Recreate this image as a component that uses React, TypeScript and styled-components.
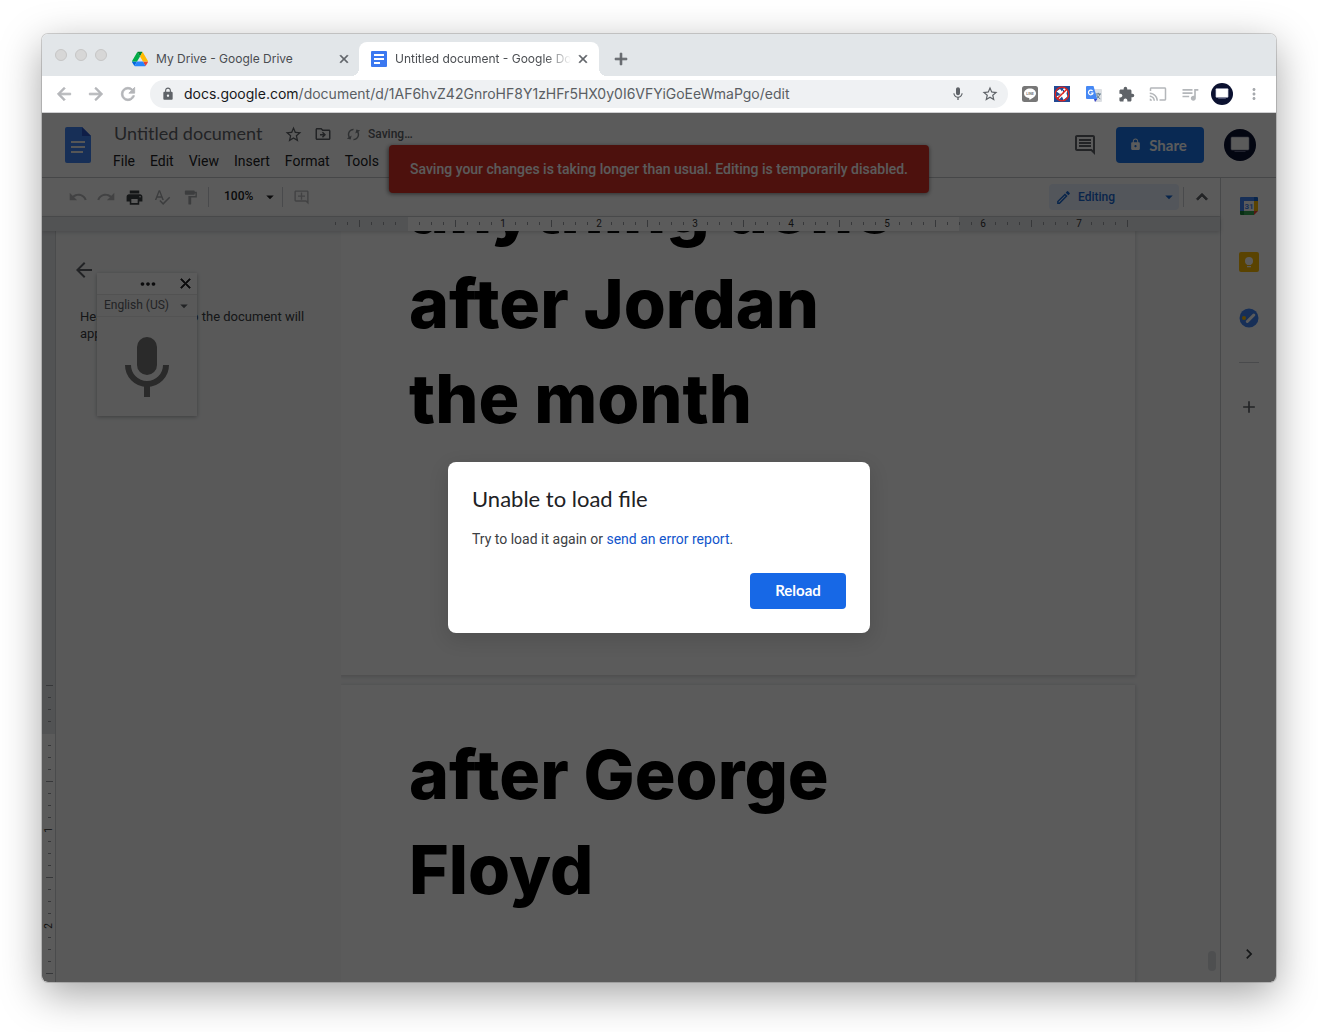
import React from 'react';
import styled, { createGlobalStyle, css } from 'styled-components';
import {
  MdAdd,
  MdArrowBack,
  MdArrowDropDown,
  MdArrowForward,
  MdCast,
  MdChevronRight,
  MdClose,
  MdExpandLess,
  MdExtension,
  MdFormatPaint,
  MdLock,
  MdMic,
  MdMoreHoriz,
  MdMoreVert,
  MdOutlineAddComment,
  MdOutlineDriveFileMove,
  MdOutlineInsertComment,
  MdOutlineModeEdit,
  MdPrint,
  MdQueueMusic,
  MdRedo,
  MdRefresh,
  MdSpellcheck,
  MdStarBorder,
  MdSync,
  MdUndo,
} from 'react-icons/md';

const uiFont = 'Inter, "Liberation Sans", sans-serif';
const docsFont = 'Roboto, "Liberation Sans", sans-serif';
const brandFont = 'Lato, Roboto, sans-serif';

const GlobalStyle = createGlobalStyle`
  *, *::before, *::after { box-sizing: border-box; }
  body { margin: 0; background: #fff; font-family: ${docsFont}; }
  button, input, select { font: inherit; color: inherit; }
  h1, p { margin: 0; }
`;

const Desktop = styled.div`
  display: flex;
  height: 100vh;
  padding: 34px 42px 50px;
`;

const BrowserWindow = styled.div`
  display: flex;
  flex: 1;
  flex-direction: column;
  min-width: 0;
  border-radius: 6px;
  overflow: hidden;
  box-shadow: 0 0 0 1px rgba(0, 0, 0, 0.16), 0 12px 42px rgba(0, 0, 0, 0.36);
`;

/* ---------- browser chrome ---------- */

const TabStrip = styled.div`
  display: flex;
  flex: none;
  height: 42px;
  padding-left: 13px;
  background: #e2e6e9;
  font-family: ${uiFont};
`;

const WindowControls = styled.div`
  display: flex;
  gap: 8px;
  width: 65px;
  padding-top: 15px;
`;

const WindowControl = styled.button`
  width: 12px;
  height: 12px;
  padding: 0;
  border: 1px solid #c6c6c6;
  border-radius: 50%;
  background: #d7d7d7;
`;

const Tab = styled.div<{ $active?: boolean }>`
  position: relative;
  display: flex;
  align-items: center;
  width: 240px;
  height: 34px;
  margin-top: 8px;
  padding: 0 6px 1px 12px;
  border-radius: 8px 8px 0 0;
  color: #4a4d51;
  font-size: 12px;
  ${(p) =>
    p.$active &&
    css`
      margin-left: -1px;
      background: #fff;
      &::before,
      &::after {
        content: '';
        position: absolute;
        bottom: 0;
        width: 8px;
        height: 8px;
      }
      &::before {
        left: -8px;
        background: radial-gradient(circle at 0 0, transparent 8px, #fff 8px);
      }
      &::after {
        right: -8px;
        background: radial-gradient(circle at 100% 0, transparent 8px, #fff 8px);
      }
    `}
`;

const TabTitle = styled.span<{ $faded?: boolean }>`
  flex: 1;
  min-width: 0;
  margin-left: 8px;
  overflow: hidden;
  white-space: nowrap;
  ${(p) => p.$faded && 'mask-image: linear-gradient(to right, #000 150px, transparent 176px);'}
`;

const IconButton = styled.button<{ $w?: number; $h?: number; $tone?: string; $bold?: boolean }>`
  display: flex;
  flex: none;
  align-items: center;
  justify-content: center;
  width: ${(p) => p.$w ?? 28}px;
  height: ${(p) => p.$h ?? 28}px;
  padding: 0;
  border: 0;
  background: transparent;
  color: ${(p) => p.$tone ?? '#5f6368'};
  ${(p) =>
    p.$bold &&
    css`
      path:not([fill='none']) {
        stroke: currentColor;
        stroke-width: 1px;
      }
    `}
`;

const NavBar = styled.div`
  display: flex;
  flex: none;
  align-items: center;
  height: 37px;
  padding: 0 6px;
  border-bottom: 1px solid #cfcfd1;
  background: #fff;
`;

const Omnibox = styled.form`
  display: flex;
  flex: 1;
  align-items: center;
  min-width: 0;
  height: 28px;
  margin: 0 6px;
  padding: 0 2px 0 11px;
  border-radius: 14px;
  background: #eff1f3;
  color: #5f6368;
`;

const Address = styled.div`
  flex: 1;
  min-width: 0;
  margin-left: 9px;
  padding-bottom: 2px;
  overflow: hidden;
  color: #5a5e63;
  font-family: ${uiFont};
  font-size: 14px;
  white-space: nowrap;
  strong {
    color: #17181a;
    font-weight: 400;
  }
`;

/* ---------- docs application ---------- */

const DocsApp = styled.div`
  position: relative;
  display: flex;
  flex: 1;
  flex-direction: column;
  min-height: 0;
  background: #fff;
`;

const DocsHeader = styled.header`
  display: flex;
  flex: none;
  align-items: center;
  height: 65px;
  padding: 0 20px 1px 23px;
  border-bottom: 1px solid #c4c7ca;
`;

const TitleArea = styled.div`
  display: flex;
  flex: 1;
  align-self: flex-start;
  flex-direction: column;
  gap: 1px;
  margin-left: 15px;
  padding-top: 8px;
`;

const TitleRow = styled.div`
  display: flex;
  align-items: center;
  height: 26px;
`;

const TitleInput = styled.input`
  width: 172px;
  padding: 0 8px 2px;
  border: 0;
  background: transparent;
  color: #5f6368;
  font-family: ${brandFont};
  font-size: 18px;
`;

const SyncIcon = styled(MdSync)`
  transform: rotate(60deg);
`;

const SaveState = styled.span`
  color: #5f6368;
  font-size: 12px;
  font-weight: 500;
`;

const MenuBar = styled.nav`
  display: flex;
  gap: 1px;
`;

const MenuItem = styled.button`
  height: 26px;
  padding: 0 7px;
  border: 0;
  background: transparent;
  color: #202124;
  font-size: 14px;
`;

const ShareButton = styled.button`
  display: flex;
  align-items: center;
  justify-content: center;
  gap: 7px;
  width: 88px;
  height: 36px;
  margin: 0 20px 0 11px;
  padding: 0 4px 0 0;
  border: 0;
  border-radius: 4px;
  background: #1a73e8;
  color: #fff;
  font-family: ${brandFont};
  font-size: 15px;
  font-weight: 700;
`;

const Toast = styled.div`
  position: absolute;
  top: 32px;
  left: 50%;
  display: flex;
  align-items: center;
  height: 48px;
  padding: 0 21px;
  border-radius: 4px;
  background: #d93025;
  box-shadow: 0 1px 4px rgba(0, 0, 0, 0.5);
  color: #fff;
  font-size: 14px;
  font-weight: 500;
  white-space: nowrap;
  transform: translateX(-50%);
`;

const Workspace = styled.div`
  display: flex;
  flex: 1;
  min-height: 0;
`;

const EditorColumn = styled.div`
  display: flex;
  flex: 1;
  flex-direction: column;
  min-width: 0;
`;

const Toolbar = styled.div`
  display: flex;
  flex: none;
  align-items: center;
  height: 39px;
  padding: 0 4px 0 22px;
  border-bottom: 1px solid #d4d6d9;
`;

const Divider = styled.span`
  flex: none;
  width: 1px;
  height: 20px;
  margin: 0 4px;
  background: #cdd0d4;
`;

const Spacer = styled.span`
  flex: 1;
`;

const SelectField = styled.label<{ $w: number; $h: number; $padLeft: number }>`
  display: flex;
  flex: none;
  align-items: center;
  width: ${(p) => p.$w}px;
  height: ${(p) => p.$h}px;
  padding-left: ${(p) => p.$padLeft}px;
  select {
    flex: 1;
    min-width: 0;
    padding: 0 0 2px;
    border: 0;
    background: transparent;
    appearance: none;
    font-size: 12px;
  }
`;

const ZoomField = styled(SelectField)`
  margin: 0 -4px;
  padding-right: 3px;
  color: #202124;
  font-weight: 500;
`;

const ModeButton = styled.button`
  display: flex;
  align-items: center;
  gap: 6px;
  width: 130px;
  height: 26px;
  padding: 0 1px 0 6px;
  border: 0;
  border-radius: 4px;
  background: #e8f0fe;
  color: #1967d2;
  font-size: 12px;
  font-weight: 500;
`;

const HorizontalRuler = styled.div`
  position: relative;
  z-index: 1;
  display: flex;
  flex: none;
  height: 14px;
  padding-left: 287px;
  background: linear-gradient(#fff, #fff) 366px 0 / 551px 100% no-repeat #e6e8ec;
  box-shadow: 0 1px 4px rgba(60, 64, 67, 0.25);
`;

const Mark = styled.span<{ $vertical?: boolean }>`
  display: flex;
  flex: none;
  align-items: center;
  justify-content: center;
  width: 12px;
  height: ${(p) => (p.$vertical ? 12 : 13)}px;
  color: #333;
  font-size: 10px;
  line-height: 12px;
  ${(p) => p.$vertical && 'transform: rotate(-90deg);'}
`;

const Tick = styled.i<{ $long?: boolean }>`
  width: 1px;
  height: ${(p) => (p.$long ? 7 : 3)}px;
  background: #9a9ea3;
`;

const CanvasRow = styled.div`
  display: flex;
  flex: 1;
  min-height: 0;
  background: #f8f9fa;
`;

const VerticalRuler = styled.div`
  display: flex;
  flex: none;
  flex-direction: column;
  align-items: center;
  width: 14px;
  padding-top: 449px;
  overflow: hidden;
  border-right: 1px solid #cfd1d4;
  background: linear-gradient(#e6e8ec, #e6e8ec) 0 0 / 100% 503px no-repeat #fff;
`;

const Outline = styled.aside`
  position: relative;
  flex: none;
  width: 285px;
  padding: 25px 30px 0 14px;
`;

const OutlineHint = styled.p`
  margin-top: 24px;
  padding-left: 10px;
  color: #3c4043;
  font-size: 13px;
  line-height: 17px;
`;

const VoicePanel = styled.section`
  position: absolute;
  top: 42px;
  left: 41px;
  display: flex;
  flex-direction: column;
  width: 100px;
  background: #f9f9f9;
  box-shadow: 0 1px 4px rgba(0, 0, 0, 0.3);
`;

const VoiceHandle = styled.div`
  display: flex;
  align-items: center;
  height: 22px;
  padding-left: 40px;
  border-bottom: 1px solid #e5e5e5;
  background: #fff;
  color: #202124;
`;

const VoiceLanguage = styled(SelectField)`
  border-bottom: 1px solid #e9e9e9;
  padding-right: 4px;
  color: #5f6368;
`;

const Canvas = styled.main`
  display: flex;
  flex: 1;
  flex-direction: column;
  gap: 10px;
  min-width: 0;
  overflow: hidden;
`;

const Sheet = styled.article<{ $first?: boolean }>`
  display: flex;
  flex: ${(p) => (p.$first ? 'none' : '1')};
  flex-direction: column;
  justify-content: ${(p) => (p.$first ? 'flex-end' : 'flex-start')};
  max-width: 794px;
  min-height: 0;
  height: ${(p) => (p.$first ? '444px' : 'auto')};
  padding: ${(p) => (p.$first ? '0 64px 229px 68px' : '42px 64px 0 68px')};
  background: #fff;
  box-shadow: 0 1px 3px 1px rgba(60, 64, 67, 0.16);
  color: #000;
  font-family: Inter, sans-serif;
  font-size: 68px;
  font-weight: 800;
  line-height: 95px;
  white-space: nowrap;
`;

const ScrollTrack = styled.div`
  display: flex;
  flex: none;
  flex-direction: column;
  justify-content: flex-end;
  width: 12px;
  padding: 0 4px 11px 0;
`;

const ScrollThumb = styled.div`
  height: 20px;
  border-radius: 4px;
  background: #dadce0;
`;

const SidePanel = styled.aside`
  display: flex;
  flex: none;
  flex-direction: column;
  align-items: center;
  width: 56px;
  border-left: 1px solid #c9ccd0;
`;

const SideRule = styled.hr`
  width: 20px;
  margin: 16px 0;
  border: 0;
  border-top: 1px solid #cdd0d4;
`;

/* ---------- error dialog ---------- */

const Scrim = styled.div`
  position: absolute;
  inset: 0;
  z-index: 5;
  display: flex;
  align-items: center;
  justify-content: center;
  background: rgba(0, 0, 0, 0.643);
`;

const Dialog = styled.div`
  display: flex;
  flex-direction: column;
  width: 422px;
  padding: 24px;
  border-radius: 8px;
  background: #fff;
  box-shadow: 0 6px 20px rgba(0, 0, 0, 0.14);
`;

const DialogTitle = styled.h1`
  color: #202124;
  font-family: ${brandFont};
  font-size: 22px;
  font-weight: 400;
  line-height: 25px;
`;

const DialogText = styled.p`
  margin: 18px 0 24px;
  color: #3c4043;
  font-size: 14px;
  line-height: 20px;
  a {
    color: #1155cc;
    text-decoration: none;
  }
`;

const ReloadButton = styled.button`
  align-self: flex-end;
  width: 96px;
  height: 36px;
  padding: 0 0 2px;
  border: 0;
  border-radius: 4px;
  background: #1768e6;
  color: #fff;
  font-family: ${brandFont};
  font-size: 15px;
  font-weight: 700;
`;

/* ---------- drawings ---------- */

const DriveLogo = () => (
  <svg width="16" height="16" viewBox="0 0 87.3 78" aria-hidden>
    <path fill="#0066da" d="m6.6 66.85 3.85 6.65c.8 1.4 1.95 2.5 3.3 3.3l13.75-23.8h-27.5c0 1.55.4 3.1 1.2 4.5z" />
    <path fill="#00ac47" d="m43.65 25-13.75-23.8c-1.35.8-2.5 1.9-3.3 3.3l-25.4 44a9.06 9.06 0 0 0 -1.2 4.5h27.5z" />
    <path fill="#ea4335" d="m73.55 76.8c1.35-.8 2.5-1.9 3.3-3.3l1.6-2.75 7.65-13.25c.8-1.4 1.2-2.95 1.2-4.5h-27.502l5.852 11.5z" />
    <path fill="#00832d" d="m43.65 25 13.75-23.8c-1.35-.8-2.9-1.2-4.5-1.2h-18.5c-1.6 0-3.15.45-4.5 1.2z" />
    <path fill="#2684fc" d="m59.8 53h-32.3l-13.75 23.8c1.35.8 2.9 1.2 4.5 1.2h50.8c1.6 0 3.15-.45 4.5-1.2z" />
    <path fill="#ffba00" d="m73.4 26.5-12.7-22c-.8-1.4-1.95-2.5-3.3-3.3l-13.75 23.8 16.15 28h27.45c0-1.55-.4-3.1-1.2-4.5z" />
  </svg>
);

const DocsFavicon = () => (
  <svg width="16" height="16" viewBox="0 0 16 16" aria-hidden>
    <rect width="16" height="16" rx="1" fill="#3b78f0" />
    <path d="M3 4h10M3 8h10M3 12h6" stroke="#fff" strokeWidth="2" />
  </svg>
);

const DocsLogo = () => (
  <svg width="26" height="36" viewBox="0 0 26 36" aria-hidden>
    <path d="M2 0h15l9 9v25a2 2 0 0 1-2 2H2a2 2 0 0 1-2-2V2a2 2 0 0 1 2-2z" fill="#4285f4" />
    <path d="M17 0l9 9h-9z" fill="#2a56c6" />
    <path d="M6 15h14M6 20h14M6 25h12" stroke="#f1f1f1" strokeWidth="2" />
  </svg>
);

const ScreenAvatar = ({ size }: { size: number }) => (
  <svg width={size} height={size} viewBox="0 0 32 32" aria-hidden>
    <circle cx="16" cy="16" r="16" fill="#0b1130" />
    <rect x="7" y="8" width="18" height="13" rx="1" fill="#fff" stroke="#8d93ad" strokeWidth=".6" />
    <path d="M10.500 22.500h11" stroke="#5d6483" strokeWidth="1.200" />
  </svg>
);

const LineExtension = () => (
  <svg width="16" height="16" viewBox="0 0 16 16" aria-hidden>
    <rect width="16" height="16" rx="2.500" fill="#777" />
    <path d="M8 2.600c-3.300 0-6 2.100-6 4.800 0 2.300 2 4.200 4.900 4.700.5.100.5.500.4 1.300 0 .5.300.5.700.2 2-1.200 6-3.400 6-6.200 0-2.700-2.700-4.800-6-4.800z" fill="#fff" />
    <text x="8" y="8.600" textAnchor="middle" fontFamily="Roboto, sans-serif" fontSize="3.600" fontWeight="700" fill="#777">LINE</text>
  </svg>
);

const BlockerExtension = () => (
  <svg width="16" height="16" viewBox="0 0 16 16" aria-hidden>
    <rect width="16" height="16" fill="#234a94" />
    <path d="M2.500 5.500L6 3l2 2.500L10 2l3.500 2-1 3.500 1 3L9.500 14 8 10.500 5.500 13l-3-2.500L6 8z" fill="#fff" />
    <path d="M9.500 4v3.500M4.500 9.500l2-1.500" stroke="#234a94" strokeWidth="1" fill="none" />
    <circle cx="8" cy="8" r="6.800" fill="none" stroke="#e3231b" strokeWidth="1.300" />
    <path d="M12.800 3.200L3.200 12.800" stroke="#e3231b" strokeWidth="1.500" />
  </svg>
);

const TranslateExtension = () => (
  <svg width="16" height="16" viewBox="0 0 16 16" aria-hidden>
    <path d="M7 3h8a1 1 0 0 1 1 1v11a1 1 0 0 1-1 1H9z" fill="#dcdfe3" />
    <path d="M9.500 8h5.500M12.200 6.800V8M13.800 8c-.5 2.200-2 3.800-3.300 4.600M10.800 9c.8 2 2 3 3.500 3.800" stroke="#5f7a8c" strokeWidth="1" fill="none" />
    <path d="M1 0h6.500l3.800 13H1a1 1 0 0 1-1-1V1a1 1 0 0 1 1-1z" fill="#4688f4" />
    <path d="M8 13h3.300L9 16z" fill="#3742c8" />
    <path d="M6.600 5.100A2.300 2.300 0 1 0 7 7H4.800" stroke="#fff" strokeWidth="1.200" fill="none" />
  </svg>
);

const CalendarLogo = () => (
  <svg width="20" height="20" viewBox="0 0 20 20" aria-hidden>
    <path d="M2 1h13v4H5v10H1V2a1 1 0 0 1 1-1z" fill="#4285f4" />
    <path d="M15 1h3a1 1 0 0 1 1 1v3h-4z" fill="#1967d2" />
    <path d="M15 5h4v10h-4z" fill="#fbbc04" />
    <path d="M1 15h4v4H2a1 1 0 0 1-1-1z" fill="#188038" />
    <path d="M5 15h10v4H5z" fill="#34a853" />
    <path d="M15 15h4l-4 4z" fill="#ea4335" />
    <path d="M5 5h10v10H5z" fill="#fff" />
    <text x="10" y="13" textAnchor="middle" fontFamily="Roboto, sans-serif" fontSize="8" fontWeight="700" fill="#4285f4">31</text>
  </svg>
);

const KeepLogo = () => (
  <svg width="20" height="20" viewBox="0 0 20 20" aria-hidden>
    <rect width="20" height="20" rx="2" fill="#fbbc04" />
    <circle cx="10" cy="9" r="4" fill="#fff" />
    <path d="M8 11h4v2H8zM8 14h4v1.200H8z" fill="#fff" />
  </svg>
);

const TasksLogo = () => (
  <svg width="20" height="20" viewBox="0 0 20 20" aria-hidden>
    <circle cx="10" cy="10" r="9.500" fill="#4285f4" />
    <circle cx="5" cy="10" r="2" fill="#fbbc04" />
    <path d="M8.300 13.500L14.800 7" stroke="#fff" strokeWidth="3" strokeLinecap="round" />
  </svg>
);

const Microphone = () => (
  <svg width="44" height="60" viewBox="0 0 44 60" aria-hidden>
    <rect x="12" width="20" height="38" rx="10" fill="#757575" />
    <path d="M3 28a19 19 0 0 0 38 0" fill="none" stroke="#757575" strokeWidth="6" />
    <path d="M22 46v14" stroke="#757575" strokeWidth="6" />
  </svg>
);

/* ---------- ruler ---------- */

// One mark for every eighth of an inch: a number on the inch, a long tick on the half.
const RulerMark = ({ step, vertical }: { step: number; vertical?: boolean }) => {
  if (step === 0) return <Mark $vertical={vertical} />;
  if (step % 8 === 0) return <Mark $vertical={vertical}>{Math.abs(step / 8)}</Mark>;
  return (
    <Mark $vertical={vertical}>
      <Tick $long={step % 4 === 0} />
    </Mark>
  );
};

const range = (from: number, to: number) => Array.from({ length: to - from + 1 }, (_, i) => from + i);

const menus = ['File', 'Edit', 'View', 'Insert', 'Format', 'Tools'];

export default function App() {
  return (
    <Desktop>
      <GlobalStyle />
      <BrowserWindow>
        <TabStrip>
          <WindowControls>
            <WindowControl aria-label="Close window" />
            <WindowControl aria-label="Minimize window" />
            <WindowControl aria-label="Zoom window" />
          </WindowControls>
          <Tab>
            <DriveLogo />
            <TabTitle>My Drive - Google Drive</TabTitle>
            <IconButton $w={20} $h={20} $bold aria-label="Close tab"><MdClose size={14} /></IconButton>
          </Tab>
          <Tab $active>
            <DocsFavicon />
            <TabTitle $faded>Untitled document - Google Docs</TabTitle>
            <IconButton $w={20} $h={20} $bold aria-label="Close tab"><MdClose size={14} /></IconButton>
          </Tab>
          <IconButton $w={44} $h={50} $bold aria-label="New tab"><MdAdd size={20} /></IconButton>
        </TabStrip>

        <NavBar>
          <IconButton $w={32} $bold $tone="#b4b6b9" aria-label="Back"><MdArrowBack size={20} /></IconButton>
          <IconButton $w={32} $bold $tone="#b4b6b9" aria-label="Forward"><MdArrowForward size={20} /></IconButton>
          <IconButton $w={32} $bold $tone="#b4b6b9" aria-label="Reload page"><MdRefresh size={20} /></IconButton>
          <Omnibox>
            <MdLock size={14} />
            <Address>
              <strong>docs.google.com</strong>/document/d/1AF6hvZ42GnroHF8Y1zHFr5HX0y0I6VFYiGoEeWmaPgo/edit
            </Address>
            <IconButton type="button" $w={32} aria-label="Search by voice"><MdMic size={16} /></IconButton>
            <IconButton type="button" $w={32} aria-label="Bookmark"><MdStarBorder size={18} /></IconButton>
          </Omnibox>
          <IconButton $w={32} aria-label="LINE"><LineExtension /></IconButton>
          <IconButton $w={32} aria-label="Blocker"><BlockerExtension /></IconButton>
          <IconButton $w={32} aria-label="Translate"><TranslateExtension /></IconButton>
          <IconButton $w={32} aria-label="Extensions"><MdExtension size={17} /></IconButton>
          <IconButton $w={32} $tone="#b4b7ba" aria-label="Cast"><MdCast size={18} /></IconButton>
          <IconButton $w={32} $tone="#b4b7ba" aria-label="Media"><MdQueueMusic size={20} /></IconButton>
          <IconButton $w={32} aria-label="Profile"><ScreenAvatar size={22} /></IconButton>
          <IconButton $w={32} $tone="#a6a9ad" aria-label="More"><MdMoreVert size={18} /></IconButton>
        </NavBar>

        <DocsApp>
          <DocsHeader>
            <DocsLogo />
            <TitleArea>
              <TitleRow>
                <TitleInput aria-label="Document title" defaultValue="Untitled document" />
                <IconButton $w={30} aria-label="Star"><MdStarBorder size={19} /></IconButton>
                <IconButton $w={30} aria-label="Move"><MdOutlineDriveFileMove size={18} /></IconButton>
                <IconButton $w={30} $tone="#80868b" aria-label="Sync"><SyncIcon size={17} /></IconButton>
                <SaveState>Saving…</SaveState>
              </TitleRow>
              <MenuBar>
                {menus.map((m) => (
                  <MenuItem key={m}>{m}</MenuItem>
                ))}
              </MenuBar>
            </TitleArea>
            <IconButton $w={40} $h={40} aria-label="Comments"><MdOutlineInsertComment size={24} /></IconButton>
            <ShareButton><MdLock size={13} />Share</ShareButton>
            <ScreenAvatar size={32} />
          </DocsHeader>

          <Workspace>
            <EditorColumn>
              <Toolbar>
                <IconButton $tone="#b8babd" aria-label="Undo"><MdUndo size={20} /></IconButton>
                <IconButton $tone="#b8babd" aria-label="Redo"><MdRedo size={20} /></IconButton>
                <IconButton $tone="#3c4043" aria-label="Print"><MdPrint size={19} /></IconButton>
                <IconButton $tone="#a8abae" aria-label="Spelling"><MdSpellcheck size={18} /></IconButton>
                <IconButton $tone="#a8abae" aria-label="Paint format"><MdFormatPaint size={17} /></IconButton>
                <Divider />
                <ZoomField $w={73} $h={24} $padLeft={15}>
                  <select aria-label="Zoom"><option>100%</option></select>
                  <MdArrowDropDown size={18} />
                </ZoomField>
                <Divider />
                <IconButton $tone="#b8babd" aria-label="Add comment"><MdOutlineAddComment size={17} /></IconButton>
                <Spacer />
                <ModeButton>
                  <MdOutlineModeEdit size={17} />
                  Editing
                  <Spacer />
                  <MdArrowDropDown size={18} />
                </ModeButton>
                <Divider />
                <IconButton $bold aria-label="Hide menus"><MdExpandLess size={22} /></IconButton>
              </Toolbar>

              <HorizontalRuler>
                {range(-6, 60).map((s) => (
                  <RulerMark key={s} step={s} />
                ))}
              </HorizontalRuler>

              <CanvasRow>
                <VerticalRuler>
                  {range(-4, 20).map((s) => (
                    <RulerMark key={s} step={s} vertical />
                  ))}
                </VerticalRuler>
                <Outline>
                  <IconButton aria-label="Close outline"><MdArrowBack size={24} /></IconButton>
                  <OutlineHint>Headings you add to the document will appear here.</OutlineHint>
                  <VoicePanel>
                    <VoiceHandle>
                      <MdMoreHoriz size={22} />
                      <Spacer />
                      <IconButton $w={24} $h={20} $bold $tone="#202124" aria-label="Close voice typing"><MdClose size={17} /></IconButton>
                    </VoiceHandle>
                    <VoiceLanguage $w={100} $h={22} $padLeft={7}>
                      <select aria-label="Language"><option>English (US)</option></select>
                      <MdArrowDropDown size={18} />
                    </VoiceLanguage>
                    <IconButton $w={100} $h={99} aria-label="Start voice typing"><Microphone /></IconButton>
                  </VoicePanel>
                </Outline>
                <Canvas>
                  <Sheet $first>
                    <p>anything done</p>
                    <p>after Jordan</p>
                    <p>the month</p>
                  </Sheet>
                  <Sheet>
                    <p>after George</p>
                    <p>Floyd</p>
                  </Sheet>
                </Canvas>
                <ScrollTrack><ScrollThumb /></ScrollTrack>
              </CanvasRow>
            </EditorColumn>

            <SidePanel>
              <IconButton $w={55} $h={56} aria-label="Calendar"><CalendarLogo /></IconButton>
              <IconButton $w={55} $h={56} aria-label="Keep"><KeepLogo /></IconButton>
              <IconButton $w={55} $h={56} aria-label="Tasks"><TasksLogo /></IconButton>
              <SideRule />
              <IconButton $w={55} $h={56} aria-label="Get add-ons"><MdAdd size={20} /></IconButton>
              <Spacer />
              <IconButton $w={55} $h={56} $tone="#3c4043" aria-label="Hide side panel"><MdChevronRight size={20} /></IconButton>
            </SidePanel>
          </Workspace>

          <Toast role="alert">Saving your changes is taking longer than usual. Editing is temporarily disabled.</Toast>

          <Scrim>
            <Dialog role="alertdialog" aria-labelledby="dialog-title">
              <DialogTitle id="dialog-title">Unable to load file</DialogTitle>
              <DialogText>
                Try to load it again or <a href="#report">send an error report</a>.
              </DialogText>
              <ReloadButton>Reload</ReloadButton>
            </Dialog>
          </Scrim>
        </DocsApp>
      </BrowserWindow>
    </Desktop>
  );
}
